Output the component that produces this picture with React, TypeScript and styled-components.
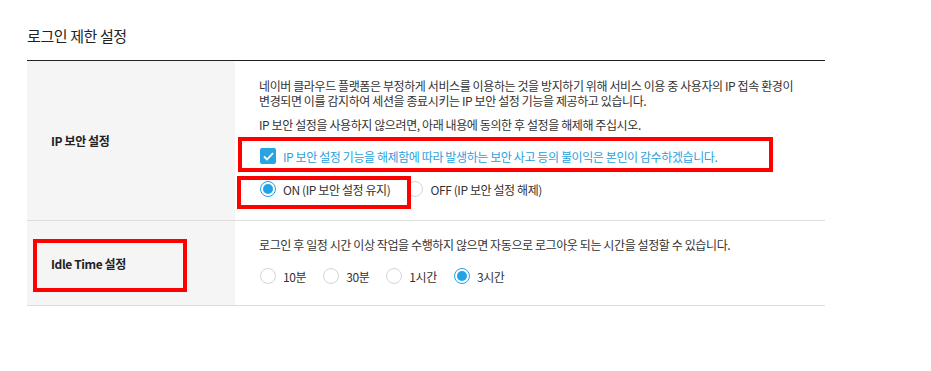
import React from "react";
import styled, { createGlobalStyle } from "styled-components";

const GlobalStyle = createGlobalStyle`
  html, body {
    margin: 0;
    padding: 0;
    background: #fff;
  }
  body {
    font-family: "Noto Sans CJK KR", "Noto Sans", sans-serif;
    color: #333;
    letter-spacing: -0.4px;
  }
`;

const Page = styled.div`
  padding: 26px 0 0 27px;
  width: 798px;
`;

const Title = styled.h2`
  margin: 0;
  height: 34px;
  font-size: 15px;
  font-weight: 400;
  line-height: 20px;
  color: #222;
  letter-spacing: -0.4px;
`;

const Table = styled.div`
  border-top: 1px solid #222;
`;

const Row = styled.div<{ $height: number }>`
  display: grid;
  grid-template-columns: 208px 1fr;
  height: ${(p) => p.$height}px;
  border-bottom: 1px solid #ddd;
`;

const Label = styled.div`
  position: relative;
  display: flex;
  align-items: center;
  padding-left: 24px;
  background: #f5f5f5;
  font-size: 12px;
  font-weight: 700;
  color: #222;
`;

const Content = styled.div<{ $top: number }>`
  position: relative;
  padding: ${(p) => p.$top}px 24px 0 24px;
  font-size: 12px;
  line-height: 15px;
`;

const Para = styled.p<{ $mb?: number }>`
  margin: 0 0 ${(p) => p.$mb ?? 0}px;
  white-space: nowrap;
`;

const CheckRow = styled.label`
  display: flex;
  align-items: center;
  gap: 7px;
  height: 20px;
  margin: 14px 0 0 1px;
  color: #2a9fde;
`;

const CheckBox = styled.span`
  display: inline-flex;
  align-items: center;
  justify-content: center;
  width: 16px;
  height: 16px;
  border-radius: 2px;
  background: #28a4e4;
`;

const RadioGroup = styled.div<{ $mt: number }>`
  display: flex;
  align-items: center;
  gap: 17px;
  margin: ${(p) => p.$mt}px 0 0 1px;
`;

const RadioItem = styled.label`
  display: flex;
  align-items: center;
  gap: 7px;
  height: 20px;
  color: #333;
`;

const RadioCircle = styled.span<{ $on?: boolean }>`
  box-sizing: border-box;
  display: inline-flex;
  align-items: center;
  justify-content: center;
  width: 16px;
  height: 16px;
  border-radius: 50%;
  border: 1px solid ${(p) => (p.$on ? "#22a3e6" : "#d5d5d5")};
  background: #fff;

  &::after {
    content: "";
    display: ${(p) => (p.$on ? "block" : "none")};
    width: 10px;
    height: 10px;
    border-radius: 50%;
    background: #22a3e6;
  }
`;

// red annotation boxes drawn over the screenshot content
const Mark = styled.div<{ $l: number; $t: number; $w: number; $h: number }>`
  position: absolute;
  left: ${(p) => p.$l}px;
  top: ${(p) => p.$t}px;
  width: ${(p) => p.$w}px;
  height: ${(p) => p.$h}px;
  box-sizing: border-box;
  border: 4px solid #ff0000;
  pointer-events: none;
`;

const Radio = ({ on, children }: { on?: boolean; children: React.ReactNode }) => (
  <RadioItem>
    <RadioCircle $on={on} />
    {children}
  </RadioItem>
);

export default function App(): JSX.Element {
  return (
    <>
      <GlobalStyle />
      <Page>
        <Title>로그인 제한 설정</Title>
        <Table>
          <Row $height={159}>
            <Label>IP 보안 설정</Label>
            <Content $top={17}>
              <Para $mb={9}>
                네이버 클라우드 플랫폼은 부정하게 서비스를 이용하는 것을 방지하기 위해 서비스 이용 중 사용자의 IP 접속 환경이
                <br />
                변경되면 이를 감지하여 세션을 종료시키는 IP 보안 설정 기능을 제공하고 있습니다.
              </Para>
              <Para>IP 보안 설정을 사용하지 않으려면, 아래 내용에 동의한 후 설정을 해제해 주십시오.</Para>
              <CheckRow>
                <CheckBox>
                  <svg width="11" height="9" viewBox="0 0 11 9">
                    <path d="M1 4.5 L4 7.5 L10 1.2" fill="none" stroke="#fff" strokeWidth="1.8" />
                  </svg>
                </CheckBox>
                IP 보안 설정 기능을 해제함에 따라 발생하는 보안 사고 등의 불이익은 본인이 감수하겠습니다.
              </CheckRow>
              <RadioGroup $mt={13}>
                <Radio on>ON (IP 보안 설정 유지)</Radio>
                <Radio>OFF (IP 보안 설정 해제)</Radio>
              </RadioGroup>
              <Mark $l={3} $t={76} $w={535} $h={35} />
              <Mark $l={2} $t={115} $w={174} $h={33} />
            </Content>
          </Row>
          <Row $height={84}>
            <Label>
              Idle Time 설정
              <Mark $l={6} $t={18} $w={154} $h={53} />
            </Label>
            <Content $top={16}>
              <Para>로그인 후 일정 시간 이상 작업을 수행하지 않으면 자동으로 로그아웃 되는 시간을 설정할 수 있습니다.</Para>
              <RadioGroup $mt={14}>
                <Radio>10분</Radio>
                <Radio>30분</Radio>
                <Radio>1시간</Radio>
                <Radio on>3시간</Radio>
              </RadioGroup>
            </Content>
          </Row>
        </Table>
      </Page>
    </>
  );
}
